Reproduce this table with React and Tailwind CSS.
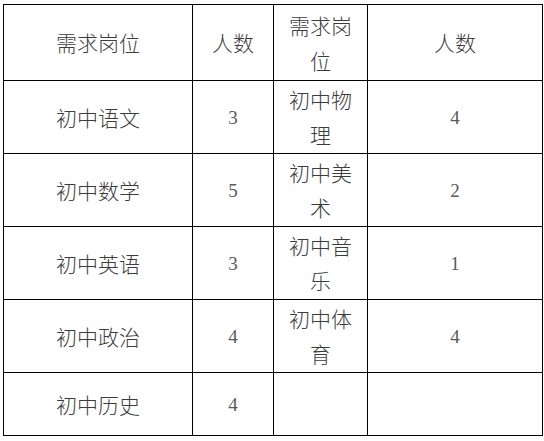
import React from 'react';

const rows = [
  ['需求岗位', '人数', '需求岗位', '人数'],
  ['初中语文', '3', '初中物理', '4'],
  ['初中数学', '5', '初中美术', '2'],
  ['初中英语', '3', '初中音乐', '1'],
  ['初中政治', '4', '初中体育', '4'],
  ['初中历史', '4', '', ''],
];

const cjk = "font-['Noto_Sans_CJK_SC',sans-serif] font-extralight text-[21px] text-[#3c3c3c]";
const num = "font-['Liberation_Serif',serif] text-[19px] text-[#5a5a5a]";

const Cell = ({ value, header }) => {
  const isNum = /^\d+$/.test(value);
  return (
    <div className="flex items-center justify-center border-r border-b border-black px-[5px] text-center leading-[35px]">
      <span className={isNum && !header ? num : cjk}>{value}</span>
    </div>
  );
};

const App = () => {
  return (
    <div className="w-[544px] h-[441px] bg-white pt-[4px] pl-[3px]">
      <div className="grid w-[540px] grid-cols-[189px_81px_94px_175px] grid-rows-[76px_73px_73px_73px_73px_63px] border-l border-t border-black">
        {rows.map((row, i) =>
          row.map((value, j) => <Cell key={`${i}-${j}`} value={value} header={i === 0} />)
        )}
      </div>
    </div>
  );
};

export default App;
